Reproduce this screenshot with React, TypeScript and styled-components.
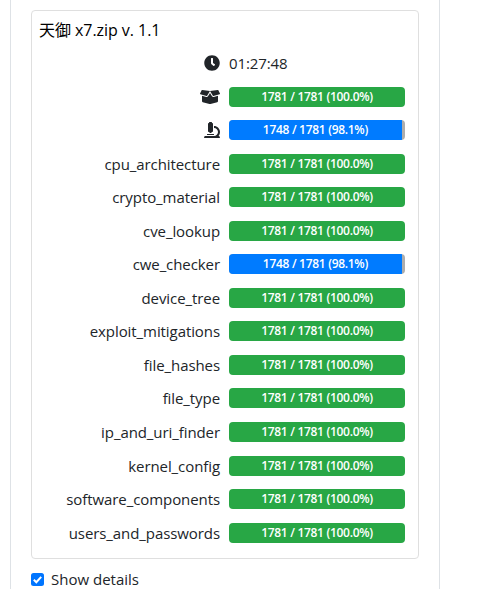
import React from "react";
import styled, { createGlobalStyle } from "styled-components";
import { FaClock, FaBoxOpen, FaMicroscope } from "react-icons/fa";

const Global = createGlobalStyle`
  html, body { margin: 0; padding: 0; background: #fff; overflow: hidden; }
  body { font-family: "Open Sans", "Noto Sans", "Noto Sans CJK SC", sans-serif; color: #212529; }
`;

const Page = styled.div`
  width: 495px;
  height: 589px;
  overflow: hidden;
`;

const Panel = styled.div`
  width: 430px;
  height: 589px;
  margin-left: 10px;
  padding: 10px 20px 0 20px;
  box-sizing: border-box;
  border-left: 1px solid #dee2e6;
  border-right: 1px solid #dee2e6;
`;

const Card = styled.div`
  width: 388px;
  height: 549px;
  box-sizing: border-box;
  border: 1px solid #dfdfdf;
  border-radius: 4px;
  padding: 7px 13px 0 7px;
`;

const Title = styled.div`
  font-size: 16px;
  line-height: 24px;
  height: 29px;
  color: #000;
  font-family: "Open Sans", "Noto Sans CJK SC", sans-serif;
  letter-spacing: -0.05px;
`;

const Rows = styled.div`
  display: grid;
  grid-template-columns: 181px 176px;
  column-gap: 9px;
  grid-auto-rows: 20px;
  row-gap: 13.55px;
  align-items: center;
  margin-top: 6px;
`;

const Label = styled.div`
  text-align: right;
  font-size: 15px;
  line-height: 20px;
  letter-spacing: -0.08px;
  color: #212529;
  white-space: nowrap;
  display: flex;
  justify-content: flex-end;
  align-items: center;
`;

const Time = styled.div`
  font-size: 15px;
  line-height: 20px;
  letter-spacing: -0.1px;
  color: #212529;
`;

const Track = styled.div`
  height: 20px;
  display: flex;
  background: #adadad;
  border-radius: 4px;
  overflow: hidden;
`;

const Fill = styled.div<{ $tone: "green" | "blue" }>`
  background: ${(p) => (p.$tone === "green" ? "#28a745" : "#007bff")};
  color: #fff;
  font-size: 12px;
  font-weight: 600;
  letter-spacing: -0.3px;
  line-height: 20px;
  text-align: center;
  white-space: nowrap;
`;

const Details = styled.label`
  display: flex;
  align-items: center;
  gap: 7px;
  margin-top: 10px;
  font-size: 15px;
  letter-spacing: 0;
  line-height: 20px;
  color: #212529;
`;

const Check = styled.input`
  appearance: none;
  width: 13px;
  height: 13px;
  margin: 0;
  border-radius: 2.5px;
  background: #0075ff;
  display: block;
`;

const CheckBox = styled.span`
  position: relative;
  width: 13px;
  height: 13px;
  display: block;
  svg { position: absolute; left: 0; top: 0; }
`;

type Row = { name: string; partial?: boolean };
const rows: Row[] = [
  { name: "cpu_architecture" },
  { name: "crypto_material" },
  { name: "cve_lookup" },
  { name: "cwe_checker", partial: true },
  { name: "device_tree" },
  { name: "exploit_mitigations" },
  { name: "file_hashes" },
  { name: "file_type" },
  { name: "ip_and_uri_finder" },
  { name: "kernel_config" },
  { name: "software_components" },
  { name: "users_and_passwords" },
];

const Bar = ({ partial }: { partial?: boolean }) => (
  <Track>
    {partial ? (
      <Fill $tone="blue" style={{ width: `${(1748 / 1781) * 100}%` }}>1748 / 1781 (98.1%)</Fill>
    ) : (
      <Fill $tone="green" style={{ width: "100%" }}>1781 / 1781 (100.0%)</Fill>
    )}
  </Track>
);

export default function App() {
  return (
    <Page>
      <Global />
      <Panel>
        <Card>
          <Title>天御 x7.zip v. 1.1</Title>
          <Rows>
            <Label><FaClock size={16} /></Label>
            <Time>01:27:48</Time>
            <Label><FaBoxOpen size={20} /></Label>
            <Bar />
            <Label><FaMicroscope size={16} /></Label>
            <Bar partial />
            {rows.map((r) => (
              <React.Fragment key={r.name}>
                <Label>{r.name}</Label>
                <Bar partial={r.partial} />
              </React.Fragment>
            ))}
          </Rows>
        </Card>
        <Details>
          <CheckBox>
            <Check type="checkbox" defaultChecked />
            <svg width="13" height="13" viewBox="0 0 13 13">
              <path d="M2.8 6.8 L5.3 9.2 L10.2 3.8" fill="none" stroke="#fff" strokeWidth="2" />
            </svg>
          </CheckBox>
          Show details
        </Details>
      </Panel>
    </Page>
  );
}
